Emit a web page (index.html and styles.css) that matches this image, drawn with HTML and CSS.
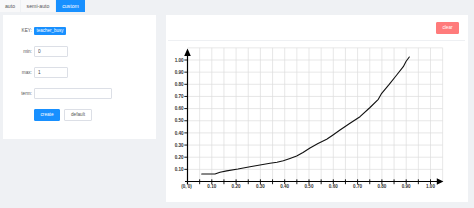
FILE: index.html
```html
<!DOCTYPE html>
<html>
<head>
<meta charset="utf-8">
<link rel="stylesheet" href="styles.css">
</head>
<body>
<div class="tabs">
  <span class="tab tab-auto">auto</span>
  <span class="tab tab-semi">semi-auto</span>
  <span class="tab tab-custom active">custom</span>
</div>
<div class="main">
  <div class="card form-card">
    <div class="row"><span class="label">KEY:</span><span class="tag">teacher_busy</span></div>
    <div class="row"><span class="label">min:</span><input class="input input-short" value="0"></div>
    <div class="row"><span class="label">max:</span><input class="input input-short" value="1"></div>
    <div class="row"><span class="label">term:</span><input class="input input-long" value=""></div>
    <div class="row row-btns"><span class="label"></span><div class="btns"><button class="btn btn-primary">create</button><button class="btn btn-default">default</button></div></div>
  </div>
  <div class="card chart-card">
    <div class="card-head"><button class="btn btn-danger">clear</button></div>
    <div class="card-body">
      <svg class="chart" width="302" height="161" viewBox="166 41 302 161" xmlns="http://www.w3.org/2000/svg">
        <path class="grid" d="M199.65 47.85V181.5M211.8 47.85V181.5M223.95 47.85V181.5M236.1 47.85V181.5M248.25 47.85V181.5M260.4 47.85V181.5M272.55 47.85V181.5M284.7 47.85V181.5M296.85 47.85V181.5M309 47.85V181.5M321.15 47.85V181.5M333.3 47.85V181.5M345.45 47.85V181.5M357.6 47.85V181.5M369.75 47.85V181.5M381.9 47.85V181.5M394.05 47.85V181.5M406.2 47.85V181.5M418.35 47.85V181.5M430.5 47.85V181.5M442.65 47.85V181.5M187.5 169.35H442.65M187.5 157.2H442.65M187.5 145.05H442.65M187.5 132.9H442.65M187.5 120.75H442.65M187.5 108.6H442.65M187.5 96.45H442.65M187.5 84.3H442.65M187.5 72.15H442.65M187.5 60H442.65M187.5 47.85H442.65"/>
        <path class="axis" d="M187.5 184.5V54M185 181.5H438"/>
        <path class="ticks" d="M184.3 169.35H188M184.3 157.2H188M184.3 145.05H188M184.3 132.9H188M184.3 120.75H188M184.3 108.6H188M184.3 96.45H188M184.3 84.3H188M184.3 72.15H188M184.3 60H188M199.65 179.3V184.2M211.8 179.3V184.2M223.95 179.3V184.2M236.1 179.3V184.2M248.25 179.3V184.2M260.4 179.3V184.2M272.55 179.3V184.2M284.7 179.3V184.2M296.85 179.3V184.2M309 179.3V184.2M321.15 179.3V184.2M333.3 179.3V184.2M345.45 179.3V184.2M357.6 179.3V184.2M369.75 179.3V184.2M381.9 179.3V184.2M394.05 179.3V184.2M406.2 179.3V184.2M418.35 179.3V184.2M430.5 179.3V184.2"/>
        <path class="arrow" d="M184.2 56L187.5 48.6L190.8 56ZM436.8 178.3L443.4 181.5L436.8 184.7Z"/>
        <path class="curve" d="M201.7 174L215 174L220 172.3L226.7 170.9L238 169L250 166.7L260 165L270 163.3L277 162.2L283.3 160.7L290 158.4L296.7 156L303 152.5L310 148L318 143.6L326.7 139.3L333 135L340 130L350 123.3L360 116.7L370 107.5L378.3 99.3L381.7 93.3L389 84.6L396.7 75L403.3 66.7L406 61.5L409.3 57"/>
        <g class="ylabels">
          <text x="183.6" y="170.9">0.10</text>
          <text x="183.6" y="158.8">0.20</text>
          <text x="183.6" y="146.6">0.30</text>
          <text x="183.6" y="134.5">0.40</text>
          <text x="183.6" y="122.3">0.50</text>
          <text x="183.6" y="110.2">0.60</text>
          <text x="183.6" y="98">0.70</text>
          <text x="183.6" y="85.9">0.80</text>
          <text x="183.6" y="73.7">0.90</text>
          <text x="183.6" y="61.6">1.00</text>
        </g>
        <g class="xlabels">
          <text x="186.5" y="188.3">(0, 0)</text>
          <text x="211.8" y="188.3">0.10</text>
          <text x="236.1" y="188.3">0.20</text>
          <text x="260.4" y="188.3">0.30</text>
          <text x="284.7" y="188.3">0.40</text>
          <text x="309" y="188.3">0.50</text>
          <text x="333.3" y="188.3">0.60</text>
          <text x="357.6" y="188.3">0.70</text>
          <text x="381.9" y="188.3">0.80</text>
          <text x="406.2" y="188.3">0.90</text>
          <text x="430.5" y="188.3">1.00</text>
        </g>
      </svg>
    </div>
  </div>
</div>
</body>
</html>
```
FILE: styles.css
```css
html, body {
  margin: 0;
  padding: 0;
}
body {
  width: 474px;
  height: 208px;
  overflow: hidden;
  background: #eff1f4;
  font-family: "Liberation Sans", Arial, sans-serif;
  color: #444;
}
.tabs {
  display: flex;
  height: 12px;
  gap: 1px;
}
.tab {
  display: block;
  height: 12px;
  line-height: 12px;
  font-size: 5.2px;
  text-align: center;
  color: #555;
  background: #f8f8f9;
}
.tab-auto { width: 20px; }
.tab-semi { width: 34px; }
.tab-custom { width: 29px; }
.tab.active {
  background: #1890ff;
  color: #fff;
}
.main {
  display: flex;
  align-items: flex-start;
  gap: 10px;
  padding: 3px 6px 0 3px;
}
.card {
  background: #fff;
  box-sizing: border-box;
}
.form-card {
  width: 153px;
  height: 124px;
  padding-top: 10px;
  display: flex;
  flex-direction: column;
  gap: 10px;
}
.row {
  display: grid;
  grid-template-columns: 29px auto;
  column-gap: 2px;
  align-items: center;
  justify-items: start;
  height: 11px;
  font-size: 4.7px;
}
.row-btns {
  height: 12px;
}
.label {
  justify-self: end;
  color: #555;
}
.tag {
  display: block;
  width: 32px;
  height: 8px;
  line-height: 8px;
  box-sizing: border-box;
  text-align: center;
  background: #1890ff;
  color: #fff;
  border-radius: 1px;
  font-size: 4.5px;
}
.input {
  box-sizing: border-box;
  height: 11px;
  margin: 0;
  padding: 0 3px;
  border: 1px solid #dcdfe6;
  border-radius: 1px;
  font-family: "Liberation Sans", Arial, sans-serif;
  font-size: 4.7px;
  color: #444;
  background: #fff;
  outline: none;
}
.input-short { width: 34px; }
.input-long { width: 78px; }
.btns {
  display: flex;
  gap: 4px;
}
.btn {
  box-sizing: border-box;
  height: 12px;
  margin: 0;
  padding: 0;
  border: 1px solid transparent;
  border-radius: 1px;
  font-family: "Liberation Sans", Arial, sans-serif;
  font-size: 4.7px;
  line-height: 10px;
  cursor: pointer;
}
.btn-primary {
  width: 26px;
  background: #1890ff;
  border-color: #1890ff;
  color: #fff;
}
.btn-default {
  width: 28px;
  background: #fff;
  border-color: #dcdfe6;
  color: #555;
}
.chart-card {
  width: 302px;
  height: 187px;
}
.card-head {
  margin: 0 3px 0 2px;
  padding: 7px 6px 0 0;
  display: flex;
  justify-content: flex-end;
  align-items: flex-start;
  border-bottom: 1px solid #eef0f3;
  box-sizing: content-box;
  height: 18px;
}
.btn-danger {
  width: 23px;
  background: #ff7b7b;
  border-color: #ff7b7b;
  color: #fff;
}
.card-body {
  height: 161px;
}
.chart {
  display: block;
}
.grid {
  fill: none;
  stroke: #dcdcdc;
  stroke-width: 0.7;
}
.axis {
  fill: none;
  stroke: #000;
  stroke-width: 1.2;
}
.ticks {
  fill: none;
  stroke: #000;
  stroke-width: 0.9;
}
.arrow {
  fill: #000;
}
.curve {
  fill: none;
  stroke: #111;
  stroke-width: 1.1;
  stroke-linejoin: round;
  stroke-linecap: round;
}
.ylabels text {
  font-family: "Liberation Sans", Arial, sans-serif;
  font-size: 4.6px;
  font-weight: bold;
  fill: #333;
  text-anchor: end;
}
.xlabels text {
  font-family: "Liberation Sans", Arial, sans-serif;
  font-size: 4.6px;
  font-weight: bold;
  fill: #333;
  text-anchor: middle;
}
```
